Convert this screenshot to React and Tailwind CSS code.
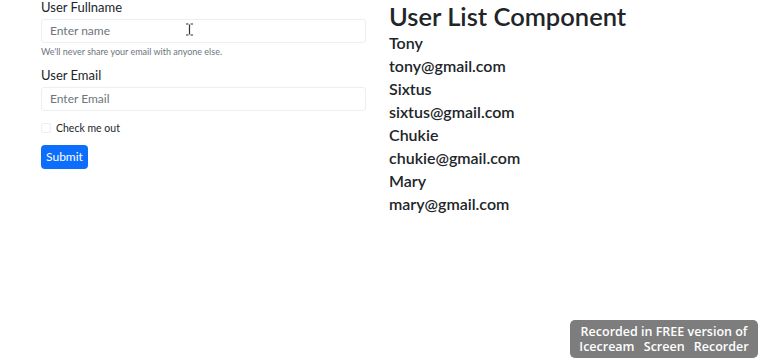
export default function App() {
  const users = [
    ["Tony", "tony@gmail.com"],
    ["Sixtus", "sixtus@gmail.com"],
    ["Chukie", "chukie@gmail.com"],
    ["Mary", "mary@gmail.com"],
  ];
  return (
    <div className="relative w-[760px] h-[360px] bg-white overflow-hidden text-[#212529]" style={{ fontFamily: 'Lato, "Noto Sans", sans-serif' }}>
      <div className="flex pl-[41px] gap-[23px]">
        <form className="w-[325px] flex flex-col" onSubmit={(e) => e.preventDefault()}>
          <label className="text-[13px] leading-[15px]">User Fullname</label>
          <div className="relative mt-[2px]">
            <input className="w-full h-[24px] border border-[#eceef0] rounded-[3px] px-[8px] text-[12px] placeholder:text-[#6c757d] outline-none" placeholder="Enter name" />
            <svg className="absolute left-[144px] top-[6px]" width="9" height="13" viewBox="0 0 9 13">
              <path d="M1 1h2.5M5.5 1H8M4.5 1.5v10M1 12h2.5M5.5 12H8" stroke="#333" strokeWidth="1.2" fill="none" />
            </svg>
          </div>
          <div className="text-[9px] leading-[12px] text-[#6c757d] mt-[3px]">We'll never share your email with anyone else.</div>
          <label className="text-[13px] leading-[15px] mt-[10px]">User Email</label>
          <input className="mt-[4px] w-full h-[24px] border border-[#eceef0] rounded-[3px] px-[8px] text-[12px] placeholder:text-[#6c757d] outline-none" placeholder="Enter Email" />
          <div className="flex items-center mt-[10px] gap-[5px]">
            <span className="w-[10px] h-[10px] border border-[#eceef0] rounded-[2px] inline-block" />
            <span className="text-[10.5px] leading-[15px]">Check me out</span>
          </div>
          <button type="submit" className="mt-[9px] w-[47px] h-[24px] bg-[#0d6efd] text-white text-[12px] rounded-[4px] flex items-center justify-center">Submit</button>
        </form>
        <div className="flex flex-col">
          <h1 className="text-[25.5px] leading-[32px] font-semibold text-[#212529]">User List Component</h1>
          <div className="flex flex-col -mt-[1px]">
            {users.map(([n, e]) => (
              <div key={n} className="flex flex-col">
                <div className="text-[16px] leading-[23px] font-semibold">{n}</div>
                <div className="text-[16px] leading-[23px] font-semibold">{e}</div>
              </div>
            ))}
          </div>
        </div>
      </div>
      <div className="absolute left-[570px] top-[320px] w-[188px] h-[38px] rounded-[5px] bg-[#7d7d7d] text-white text-[12.5px] leading-[15px] font-semibold flex flex-col items-center justify-center" style={{ fontFamily: '"Open Sans", sans-serif' }}>
        <div>Recorded in FREE version of</div>
        <div className="[word-spacing:6px]">Icecream Screen Recorder</div>
      </div>
    </div>
  );
}
